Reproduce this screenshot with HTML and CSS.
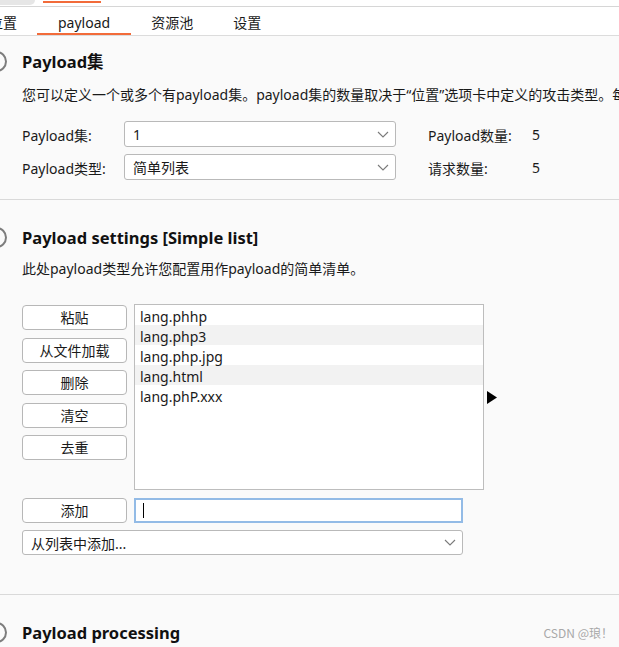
FILE: index.html
```html
<!DOCTYPE html>
<html lang="zh-CN">
<head>
<meta charset="utf-8">
<title>Intruder - payload</title>
<link rel="stylesheet" href="styles.css">
</head>
<body>
<div class="page">
  <div class="topstrip">
    <div class="topstrip-tab"></div>
    <div class="topstrip-accent"></div>
  </div>
  <nav class="tabs">
    <div class="tab tab-first">位置</div>
    <div class="tab tab-active">payload</div>
    <div class="tab">资源池</div>
    <div class="tab">设置</div>
  </nav>

  <section class="section section-first">
    <div class="heading">
      <span class="ring"></span>
      <h2 class="heading-text">Payload集</h2>
    </div>
    <p class="desc desc-first">您可以定义一个或多个有payload集。payload集的数量取决于“位置”选项卡中定义的攻击类型。每个payload集可以使用多种payload类型，并且每种payload类型都可以以不同方式进行定制。</p>
    <div class="form-grid">
      <div class="label">Payload集:</div>
      <div class="select"><span class="select-value">1</span><svg class="chev" width="12" height="7" viewBox="0 0 12 7"><polyline points="1,1 6,6 11,1" fill="none" stroke="#7a7a7a" stroke-width="1.1"/></svg></div>
      <div></div>
      <div class="label">Payload数量:</div>
      <div class="value">5</div>
      <div class="label">Payload类型:</div>
      <div class="select"><span class="select-value">简单列表</span><svg class="chev" width="12" height="7" viewBox="0 0 12 7"><polyline points="1,1 6,6 11,1" fill="none" stroke="#7a7a7a" stroke-width="1.1"/></svg></div>
      <div></div>
      <div class="label">请求数量:</div>
      <div class="value">5</div>
    </div>
  </section>

  <section class="section section-second">
    <div class="heading">
      <span class="ring"></span>
      <h2 class="heading-text">Payload settings [Simple list]</h2>
    </div>
    <p class="desc desc-second">此处payload类型允许您配置用作payload的简单清单。</p>
    <div class="list-area">
      <div class="btn-col">
        <button class="btn">粘贴</button>
        <button class="btn">从文件加载</button>
        <button class="btn">删除</button>
        <button class="btn">清空</button>
        <button class="btn">去重</button>
      </div>
      <div class="listbox">
        <div class="row">lang.phhp</div>
        <div class="row row-alt">lang.php3</div>
        <div class="row">lang.php.jpg</div>
        <div class="row row-alt">lang.html</div>
        <div class="row">lang.phP.xxx</div>
      </div>
      <svg class="arrow" width="10" height="13" viewBox="0 0 10 13"><polygon points="0,0 10,6.5 0,13" fill="#000"/></svg>
    </div>
    <div class="add-row">
      <button class="btn">添加</button>
      <div class="input"><span class="caret"></span></div>
    </div>
    <div class="select select-wide"><span class="select-value">从列表中添加...</span><svg class="chev" width="12" height="7" viewBox="0 0 12 7"><polyline points="1,1 6,6 11,1" fill="none" stroke="#7a7a7a" stroke-width="1.1"/></svg></div>
  </section>

  <section class="section section-third">
    <div class="heading">
      <span class="ring"></span>
      <h2 class="heading-text">Payload processing</h2>
      <span class="watermark">CSDN @琅！</span>
    </div>
  </section>
</div>
</body>
</html>
```

FILE: styles.css
```css
* { box-sizing: border-box; }
html, body { margin: 0; padding: 0; }
body {
  width: 619px;
  height: 647px;
  overflow: hidden;
  background: #fafafa;
  font-family: "Noto Sans", "Noto Sans CJK SC", sans-serif;
  font-size: 14px;
  color: #1a1a1a;
}
.page { width: 619px; overflow: hidden; }

.topstrip {
  height: 7px;
  background: #fff;
  border-bottom: 1px solid #d6d6d6;
  display: flex;
  align-items: flex-start;
}
.topstrip-tab {
  width: 35px;
  height: 5px;
  background: #e6e6e6;
  border-radius: 0 0 6px 0;
}
.topstrip-accent {
  margin-left: 8px;
  width: 58px;
  height: 2px;
  margin-top: 1px;
  background: #f26b3a;
}

.tabs {
  display: flex;
  height: 29px;
  background: #fff;
  border-bottom: 1px solid #dcdcdc;
}
.tab {
  padding: 0 20px;
  height: 28px;
  line-height: 31px;
  font-size: 14px;
  color: #1a1a1a;
  white-space: nowrap;
  border-bottom: 2px solid transparent;
}
.tab-first { margin-left: -31px; }
.tab-active { border-bottom-color: #f26b3a; padding: 0 21px; }

.section {
  padding-left: 22px;
  border-bottom: 1px solid #d9d9d9;
}
.section-first { padding-top: 13px; padding-bottom: 19px; }
.section-second { padding-top: 25px; padding-bottom: 39px; }
.section-third { padding-top: 25px; border-bottom: none; }

.heading {
  display: flex;
  align-items: center;
  height: 24px;
}
.ring {
  flex: none;
  width: 21px;
  height: 21px;
  margin-left: -36px;
  margin-right: 15px;
  border: 2px solid #7d7d7d;
  border-radius: 50%;
}
.heading-text {
  margin: 0;
  font-size: 16.5px;
  font-weight: 700;
  color: #111;
  white-space: nowrap;
}
.watermark {
  margin-left: auto;
  margin-right: 6px;
  font-size: 12px;
  color: #a8a8a8;
  font-family: "Noto Sans CJK SC", sans-serif;
}

.desc {
  margin: 0;
  line-height: 20px;
  white-space: nowrap;
  overflow: hidden;
}
.desc-first { margin-top: 12px; }
.desc-second { margin-top: 10px; }

.form-grid {
  margin-top: 16px;
  display: grid;
  grid-template-columns: 102px 272px 32px 104px auto;
  grid-auto-rows: 26px;
  row-gap: 7px;
  align-items: center;
}
.label { white-space: nowrap; padding-top: 1px; }
.value { white-space: nowrap; padding-top: 1px; padding-left: 0; }

.select {
  height: 26px;
  background: #fff;
  border: 1px solid #b9b9b9;
  border-radius: 3px;
  display: flex;
  align-items: center;
  justify-content: space-between;
  padding: 0 6px 0 8px;
}
.select-value { white-space: nowrap; }
.chev { flex: none; }
.select-wide { width: 441px; height: 25px; margin-top: 7px; }

.list-area {
  margin-top: 25px;
  display: flex;
  align-items: center;
}
.btn-col {
  align-self: flex-start;
  display: flex;
  flex-direction: column;
  gap: 7.5px;
  padding-top: 1px;
}
.btn {
  width: 105px;
  height: 25px;
  padding: 0;
  background: #fff;
  border: 1px solid #b7b7b7;
  border-radius: 4px;
  font-family: inherit;
  font-size: 14px;
  color: #1a1a1a;
  line-height: 23px;
}
.listbox {
  margin-left: 7px;
  width: 350px;
  height: 186px;
  background: #fff;
  border: 1px solid #bdbdbd;
}
.row {
  height: 20px;
  line-height: 20px;
  padding-left: 5px;
  padding-top: 2px;
  white-space: nowrap;
}
.row-alt { background: #f2f2f2; }
.arrow { margin-left: 3px; flex: none; }

.add-row {
  margin-top: 8px;
  display: flex;
  gap: 7px;
}
.input {
  width: 329px;
  height: 25px;
  background: #fff;
  border: 2px solid #93bbe6;
  display: flex;
  align-items: center;
  padding-left: 7px;
}
.caret {
  width: 1px;
  height: 15px;
  background: #000;
}
```
